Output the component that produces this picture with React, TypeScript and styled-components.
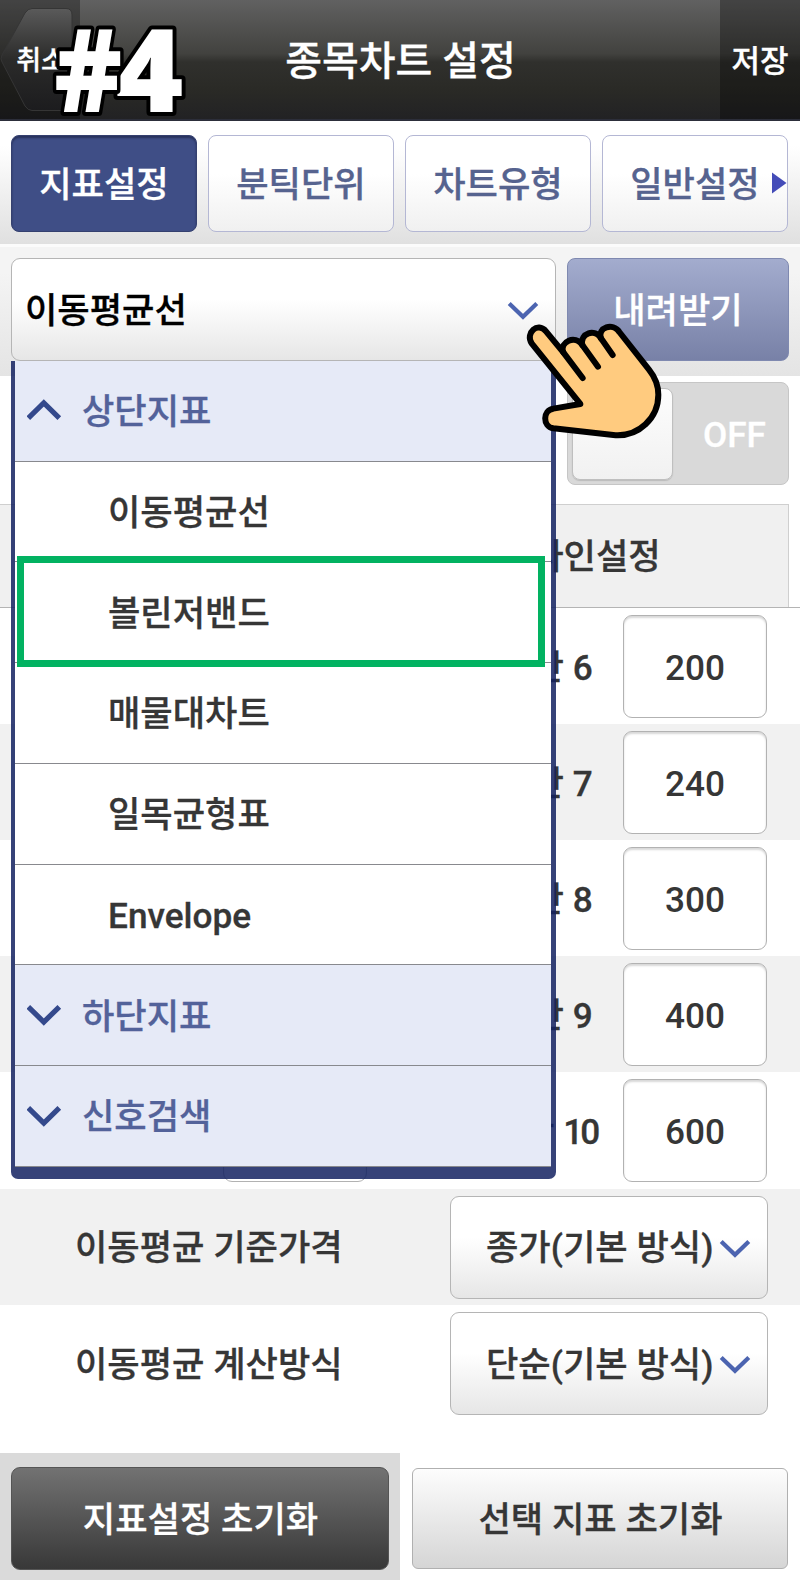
import React from "react";
import styled, { createGlobalStyle, css } from "styled-components";

const GlobalStyle = createGlobalStyle`
  *, *::before, *::after { box-sizing: border-box; }
  body {
    margin: 0;
    background: #fff;
    font-family: Roboto, "Noto Sans CJK KR", sans-serif;
    font-size: 35.2px;
    font-weight: 500;
    color: #363636;
    line-height: 1;
    -webkit-text-stroke-width: 0.3px;
  }
`;

const Screen = styled.div`
  position: relative;
  width: 800px;
  height: 1580px;
  overflow: hidden;
  display: flex;
  flex-direction: column;
  background: #fff;
  white-space: nowrap;
`;

const Label = styled.span`
  display: block;
  padding-top: 4px;
`;

const Header = styled.header`
  height: 121px;
  flex: none;
  display: grid;
  grid-template-columns: 80px 1fr 80px;
  border-bottom: 2px solid #2c2e3a;
  background: linear-gradient(#616161, #42423f 45%, #30302d 52%, #2a2a26 75%, #222224);
  color: #fff;
`;

const Title = styled.h1`
  margin: 0;
  font-size: 40px;
  font-weight: 500;
  display: flex;
  align-items: center;
  justify-content: center;
  padding-left: 1px;
`;

const HeaderButton = styled.div<{ $size: number }>`
  position: relative;
  background: rgba(0, 0, 0, 0.3);
  display: flex;
  align-items: center;
  justify-content: center;
  font-size: ${(p) => p.$size}px;
`;

const BackShape = styled.svg`
  position: absolute;
  left: 0;
  top: 0;
`;

const BackLabel = styled(Label)`
  position: relative;
  padding-left: 2px;
`;

const StepBadge = styled.svg`
  position: absolute;
  left: 40px;
  top: 10px;
  font-family: "Open Sans", sans-serif;
  font-weight: 800;
  font-size: 115.8px;
  fill: #fff;
  -webkit-text-stroke-width: 0;

  text {
    stroke: #000;
    stroke-width: 8px;
    stroke-linejoin: round;
    paint-order: stroke fill;
  }
`;

const Tabs = styled.nav`
  position: relative;
  flex: none;
  height: 123px;
  padding: 14px 12px 0 11px;
  display: grid;
  grid-template-columns: repeat(4, 186px);
  column-gap: 11px;
  background: linear-gradient(#fff 20%, #e0e0e0);
`;

const Tab = styled.div<{ $active?: boolean }>`
  height: 97px;
  border-radius: 8px;
  display: flex;
  align-items: center;
  justify-content: center;
  border: 1px solid #b4b7d4;
  background: linear-gradient(#fff 40%, #f0f0f0);
  color: #56638f;
  ${(p) =>
    p.$active &&
    css`
      border-color: #35406f;
      background: #3f4e86;
      color: #fff;
      box-shadow: inset 0 2px 2px #28325c;
    `}
`;

const MoreArrow = styled.svg`
  position: absolute;
  left: 772px;
  top: 51px;
`;

const Picker = styled.section`
  flex: none;
  height: 132px;
  padding: 11px 11px 0;
  display: flex;
  gap: 11px;
  border-top: 3px solid #fbfbfb;
  background: linear-gradient(#f4f4f4 20%, #e4e4e4);
`;

const SelectBox = styled.div<{ $w: number }>`
  width: ${(p) => p.$w}px;
  height: 103px;
  flex: none;
  border: 1px solid #b5b5b5;
  border-radius: 9px;
  background: linear-gradient(#fff 40%, #e6e6e6);
  display: flex;
  align-items: center;
`;

const PickerValue = styled(Label)`
  color: #000;
  padding-left: 13px;
  flex: 1;
`;

const PickerChevron = styled.span`
  padding: 5px 15px 0 0;
  display: flex;
`;

const Download = styled.div`
  width: 222px;
  height: 103px;
  border-radius: 8px;
  border: 1px solid #7f89b0;
  background: linear-gradient(#a3acce, #7881a7);
  color: #fff;
  display: flex;
  align-items: center;
  justify-content: center;
`;

const ToggleRow = styled.div`
  flex: none;
  height: 128px;
  padding: 6px 11px 0 0;
  display: flex;
  justify-content: flex-end;
`;

const Toggle = styled.div`
  width: 222px;
  height: 103px;
  border-radius: 8px;
  border: 1px solid #c6c6c6;
  background: #d9d9d9;
  display: flex;
  align-items: center;
  color: #fff;
  padding-left: 4px;
`;

const Knob = styled.div`
  width: 101px;
  height: 92px;
  border-radius: 8px;
  border: 1px solid #bfbfbf;
  background: linear-gradient(#fdfdfd, #f1f1f1);
  box-shadow: 0 1px 1px #bbb;
`;

const ToggleText = styled(Label)`
  flex: 1;
  padding-left: 30px;
`;

const TableHead = styled.div`
  flex: none;
  height: 104px;
  padding-right: 11px;
  border-bottom: 1px solid #b4b4b4;
  display: flex;
`;

const HeadCell = styled.div<{ $w: number }>`
  width: ${(p) => p.$w}px;
  border: 1px solid #cfcfcf;
  border-width: 1px 1px 0 0;
  background: #f0f0f0;
  display: flex;
  align-items: center;
  justify-content: center;
  padding-left: 4px;
`;

const PeriodTable = styled.div`
  flex: none;
  height: 581px;
`;

const Row = styled.div<{ $odd?: boolean }>`
  height: 116px;
  padding-top: 1px;
  display: grid;
  grid-template-columns: 223px 145px 110px 145px 145px;
  align-items: center;
  background: ${(p) => (p.$odd ? "#f1f1f1" : "#fff")};
`;

const Period = styled(Label)<{ $tight: boolean }>`
  grid-column: 4;
  padding-right: ${(p) => (p.$tight ? 14 : 9)}px;
  text-align: center;
`;

const PeriodNumber = styled.span<{ $tight: boolean }>`
  letter-spacing: ${(p) => (p.$tight ? -3 : 0)}px;
`;

const Field = styled.div<{ $col: number }>`
  grid-column: ${(p) => p.$col};
  width: 144px;
  height: 103px;
  border: 1px solid #b2b2b2;
  border-radius: 9px;
  background: #fff;
  box-shadow: inset 0 2px 2px #d8d8d8;
  display: flex;
  align-items: center;
  justify-content: center;
  -webkit-text-stroke-width: 0;
`;

const OptionRow = styled.div<{ $odd?: boolean }>`
  flex: none;
  height: 116.2px;
  padding: 0 32px 0 75px;
  display: flex;
  align-items: center;
  justify-content: space-between;
  background: ${(p) => (p.$odd ? "#f1f1f1" : "#fff")};
`;

const OptionValue = styled(Label)`
  padding-left: 35px;
  flex: 1;
`;

const Footer = styled.footer`
  margin-top: auto;
  flex: none;
  height: 127px;
  display: grid;
  grid-template-columns: 400px 400px;
`;

const FooterCell = styled.div<{ $dark?: boolean }>`
  padding: ${(p) => (p.$dark ? "14px 11px 10px" : "15px 12px 11px")};
  background: ${(p) => (p.$dark ? "#dadada" : "#fff")};
  display: flex;
`;

const FooterButton = styled.div<{ $dark?: boolean }>`
  flex: 1;
  border-radius: ${(p) => (p.$dark ? 9 : 6)}px;
  border: ${(p) => (p.$dark ? "1px solid #555" : "1.5px solid #b0b0b0")};
  background: ${(p) =>
    p.$dark ? "linear-gradient(#727272, #383838)" : "linear-gradient(#fdfdfd, #d5d5d5)"};
  color: ${(p) => (p.$dark ? "#fff" : "#363636")};
  display: flex;
  align-items: center;
  justify-content: center;
  padding-left: 1px;
`;

const Menu = styled.div`
  position: absolute;
  left: 11px;
  top: 361px;
  width: 545px;
  height: 818px;
  border: solid rgba(19, 34, 97, 0.85);
  border-width: 0 5px 12px 4px;
  border-radius: 0 0 7px 7px;
  background: transparent;
`;

const MenuItem = styled.div<{ $group?: boolean }>`
  height: 100.72px;
  border-bottom: 1px solid #88898e;
  display: flex;
  align-items: center;
  gap: 20px;
  padding-left: ${(p) => (p.$group ? 12 : 93)}px;
  background: ${(p) => (p.$group ? "#e6eaf7" : "#fff")};
  color: ${(p) => (p.$group ? "#53629a" : "#363636")};
`;

const Highlight = styled.div`
  position: absolute;
  left: 17px;
  top: 556px;
  width: 528px;
  height: 111px;
  border: 7.5px solid #02b261;
`;

const Hand = styled.svg`
  position: absolute;
  left: 525px;
  top: 321.7px;
`;

const Chevron = ({ big, up }: { big?: boolean; up?: boolean }) => (
  <svg
    width={big ? 35 : 34}
    height={big ? 26 : 24}
    viewBox={big ? "0 0 35 26" : "0 0 34 24"}
    fill="none"
    stroke={big ? "#34498c" : "#4c64b0"}
    strokeWidth={big ? 5.2 : 4.2}
  >
    <path
      transform={up ? "translate(0 25) scale(1 -1)" : undefined}
      d={big ? "M1.300 4.800 16.800 20 32.300 4.800" : "M3.200 3.500 17 16.800 30.800 3.500"}
    />
  </svg>
);

const tabs = ["지표설정", "분틱단위", "차트유형", "일반설정"];

const periods = [
  { no: 6, value: 200 },
  { no: 7, value: 240 },
  { no: 8, value: 300 },
  { no: 9, value: 400 },
  { no: 10, value: 600 },
];

const options = [
  { name: "이동평균 기준가격", value: "종가(기본 방식)" },
  { name: "이동평균 계산방식", value: "단순(기본 방식)" },
];

const menu = [
  { label: "상단지표", group: true, open: true },
  { label: "이동평균선" },
  { label: "볼린저밴드" },
  { label: "매물대차트" },
  { label: "일목균형표" },
  { label: "Envelope" },
  { label: "하단지표", group: true },
  { label: "신호검색", group: true },
];

export default function App() {
  return (
    <Screen>
      <GlobalStyle />
      <Header>
        <HeaderButton $size={27}>
          <BackShape width="80" height="119" viewBox="0 0 80 119">
            <defs>
              <linearGradient id="back" x1="0" y1="0" x2="0" y2="1">
                <stop offset="0" stopColor="#5a5a5a" />
                <stop offset="0.5" stopColor="#2b2b2a" />
                <stop offset="1" stopColor="#1c1c1e" />
              </linearGradient>
            </defs>
            <path
              d="M32 8.500H66Q72 8.500 72 15V104Q72 110.500 66 110.500H32Q28 110.500 25 106L2 62Q0 59 2 55L25 13Q28 8.500 32 8.500Z"
              fill="url(#back)"
              stroke="#353535"
            />
          </BackShape>
          <BackLabel>취소</BackLabel>
        </HeaderButton>
        <Title>
          <Label>종목차트 설정</Label>
        </Title>
        <HeaderButton $size={31}>
          <Label>저장</Label>
        </HeaderButton>
      </Header>
      <Tabs>
        {tabs.map((t, i) => (
          <Tab key={t} $active={i === 0}>
            <Label>{t}</Label>
          </Tab>
        ))}
        <MoreArrow width="15" height="22" viewBox="0 0 15 22">
          <path d="M0 .5 14.500 11 0 21.500Z" fill="#444cb8" />
        </MoreArrow>
      </Tabs>
      <Picker>
        <SelectBox $w={545}>
          <PickerValue>이동평균선</PickerValue>
          <PickerChevron>
            <Chevron />
          </PickerChevron>
        </SelectBox>
        <Download>
          <Label>내려받기</Label>
        </Download>
      </Picker>
      <ToggleRow>
        <Toggle>
          <Knob />
          <ToggleText>OFF</ToggleText>
        </Toggle>
      </ToggleRow>
      <TableHead>
        <HeadCell $w={400} />
        <HeadCell $w={389}>
          <Label>라인설정</Label>
        </HeadCell>
      </TableHead>
      <PeriodTable>
        {periods.map((p, i) => (
          <Row key={p.no} $odd={i % 2 === 1}>
            <Field $col={2} />
            <Period $tight={p.no > 9}>
              기간 <PeriodNumber $tight={p.no > 9}>{p.no}</PeriodNumber>
            </Period>
            <Field $col={5}>
              <Label>{p.value}</Label>
            </Field>
          </Row>
        ))}
      </PeriodTable>
      {options.map((o, i) => (
        <OptionRow key={o.name} $odd={i === 0}>
          <Label>{o.name}</Label>
          <SelectBox $w={318}>
            <OptionValue>{o.value}</OptionValue>
            <PickerChevron>
              <Chevron />
            </PickerChevron>
          </SelectBox>
        </OptionRow>
      ))}
      <Footer>
        <FooterCell $dark>
          <FooterButton $dark>
            <Label>지표설정 초기화</Label>
          </FooterButton>
        </FooterCell>
        <FooterCell>
          <FooterButton>
            <Label>선택 지표 초기화</Label>
          </FooterButton>
        </FooterCell>
      </Footer>
      <Menu>
        {menu.map((m) => (
          <MenuItem key={m.label} $group={m.group}>
            {m.group && <Chevron big up={m.open} />}
            <Label>{m.label}</Label>
          </MenuItem>
        ))}
      </Menu>
      <Highlight />
      <StepBadge width="160" height="120" viewBox="40 10 160 120">
        <text x="115.500" y="111.800">
          4
        </text>
        <text transform="translate(54.500 111.800) scale(0.88 1)">#</text>
      </StepBadge>
      <Hand width="138.33" height="118.33" viewBox="375 245 415 355">
        <path
          d="M541 491 395 309C375 278 413 243 438 273L490 336C478 304 526 282 547 314C540 277 585 264 603 294C592 261 639 246 658 275L747 388C767 413 775 433 775 463C775 531 718 591 640 584L460 564C427 559 428 509 460 505Z"
          fill="#ffcb7f"
          stroke="#000"
          strokeWidth="18"
          strokeLinejoin="round"
        />
        <path
          d="M490 336 548 413M547 314 594 379M603 294 638 344"
          fill="none"
          stroke="#000"
          strokeWidth="18"
          strokeLinecap="round"
        />
      </Hand>
    </Screen>
  );
}
